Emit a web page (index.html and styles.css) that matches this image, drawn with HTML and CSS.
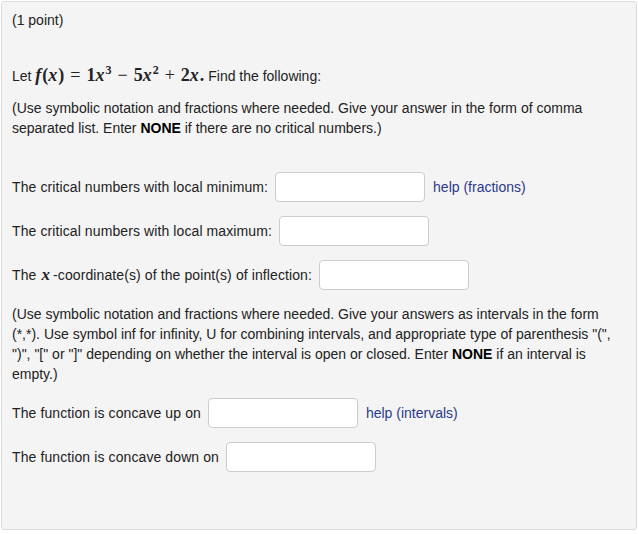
FILE: index.html
```html
<!DOCTYPE html>
<html>
<head>
<meta charset="utf-8">
<link rel="stylesheet" href="styles.css">
</head>
<body>
<div class="panel">
  <div class="points">(1 point)</div>
  <div class="intro">Let <span class="math"><i>f</i>(<i>x</i>)<span class="op">=</span>1<i>x</i><sup>3</sup><span class="op">−</span>5<i>x</i><sup>2</sup><span class="op">+</span>2<i>x</i>.</span> Find the following:</div>
  <p class="note">(Use symbolic notation and fractions where needed. Give your answer in the form of comma separated list. Enter <b>NONE</b> if there are no critical numbers.)</p>
  <div class="rows first">
    <div class="row"><span>The critical numbers with local minimum:</span><input class="ans" type="text"><a class="help">help (fractions)</a></div>
    <div class="row"><span>The critical numbers with local maximum:</span><input class="ans" type="text"></div>
    <div class="row"><span>The <i class="mx">x</i>-coordinate(s) of the point(s) of inflection:</span><input class="ans" type="text"></div>
  </div>
  <p class="note second">(Use symbolic notation and fractions where needed. Give your answers as intervals in the form (*,*). Use symbol inf for infinity, U for combining intervals, and appropriate type of parenthesis "(", ")", "[" or "]" depending on whether the interval is open or closed. Enter <b>NONE</b> if an interval is empty.)</p>
  <div class="rows last">
    <div class="row"><span>The function is concave up on</span><input class="ans" type="text"><a class="help">help (intervals)</a></div>
    <div class="row"><span>The function is concave down on</span><input class="ans" type="text"></div>
  </div>
</div>
</body>
</html>
```
FILE: styles.css
```css
html, body {
  margin: 0;
  padding: 0;
  background: #ffffff;
}
body {
  font-family: "Liberation Sans", Arial, sans-serif;
  font-size: 14px;
  line-height: 20px;
  color: #222222;
}
.panel {
  box-sizing: border-box;
  margin: 1px 0 0 1px;
  width: 636px;
  height: 529px;
  background: #f4f4f4;
  border: 1px solid #dcdcdc;
  border-radius: 3px;
  padding: 8px 10px 0 10px;
}
.points {
  height: 20px;
}
.intro {
  margin-top: 35px;
  height: 20px;
  line-height: 20px;
}
.math {
  font-family: "Liberation Serif", "Times New Roman", serif;
  font-size: 18px;
  font-weight: bold;
}
.math i {
  padding-right: 1px;
}
.op {
  margin: 0 6px;
  font-weight: normal;
}
.math sup {
  font-size: 12px;
  line-height: 0;
  vertical-align: 7px;
}
.mx {
  font-family: "Liberation Serif", "Times New Roman", serif;
  font-size: 17px;
  font-weight: bold;
  padding: 0 3px 0 1px;
}
.row span {
  letter-spacing: 0.1px;
}
.note {
  margin: 13px 0 0 0;
  padding-right: 4px;
}
.note b {
  color: #000;
}
.rows {
  display: flex;
  flex-direction: column;
  gap: 14px;
  margin-top: 34px;
}
.second {
  margin-top: 14px;
}
.rows.last {
  margin-top: 14px;
}
.row {
  display: flex;
  align-items: center;
  height: 30px;
}
.ans {
  box-sizing: border-box;
  width: 150px;
  height: 30px;
  margin: 0 0 0 7px;
  border: 1px solid #cccccc;
  border-radius: 4px;
  background: #ffffff;
  padding: 4px 6px;
  font: inherit;
}
.help {
  margin-left: 8px;
  color: #2b3a8c;
}
```
